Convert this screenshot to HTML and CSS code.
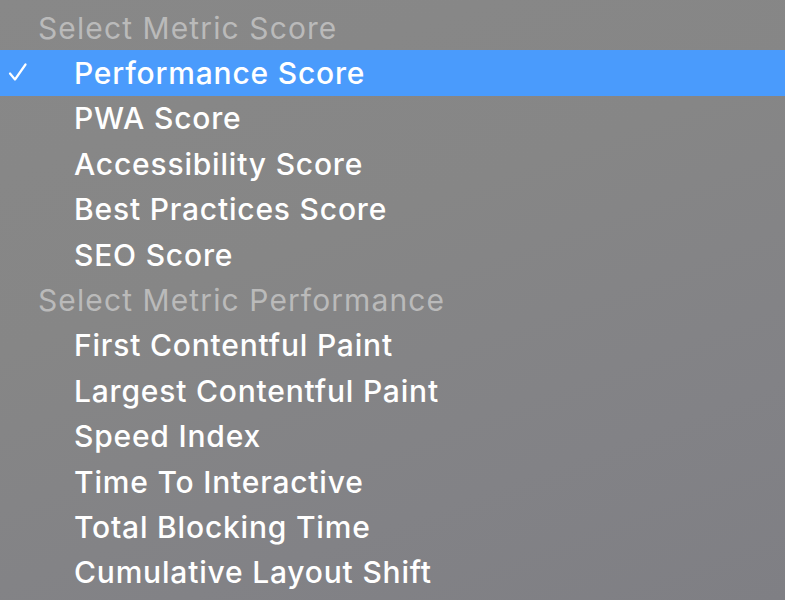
FILE: index.html
```html
<!DOCTYPE html>
<html>
<head>
<meta charset="utf-8">
<link rel="stylesheet" href="styles.css">
</head>
<body>
<div class="menu">
  <div class="header">Select Metric Score</div>
  <div class="item selected"><span class="check"><svg width="20" height="20" viewBox="0 0 20 20"><path d="M2 10.5 L7 16.5 L17.5 1.5" fill="none" stroke="#ffffff" stroke-width="2.2" stroke-linecap="round" stroke-linejoin="round"/></svg></span><span class="label">Performance Score</span></div>
  <div class="item"><span class="check"></span><span class="label">PWA Score</span></div>
  <div class="item"><span class="check"></span><span class="label">Accessibility Score</span></div>
  <div class="item"><span class="check"></span><span class="label">Best Practices Score</span></div>
  <div class="item"><span class="check"></span><span class="label">SEO Score</span></div>
  <div class="header">Select Metric Performance</div>
  <div class="item"><span class="check"></span><span class="label">First Contentful Paint</span></div>
  <div class="item"><span class="check"></span><span class="label">Largest Contentful Paint</span></div>
  <div class="item"><span class="check"></span><span class="label">Speed Index</span></div>
  <div class="item"><span class="check"></span><span class="label">Time To Interactive</span></div>
  <div class="item"><span class="check"></span><span class="label">Total Blocking Time</span></div>
  <div class="item"><span class="check"></span><span class="label">Cumulative Layout Shift</span></div>
</div>
</body>
</html>
```
FILE: styles.css
```css
html, body {
  margin: 0;
  padding: 0;
  width: 785px;
  height: 600px;
  overflow: hidden;
}
body {
  background: linear-gradient(160deg, #888888 0%, #868686 40%, #828286 75%, #7f7f84 100%);
  font-family: Inter, "Liberation Sans", sans-serif;
}
.menu {
  padding-top: 5px;
  display: flex;
  flex-direction: column;
}
.header, .item {
  height: 45.4px;
  display: flex;
  align-items: center;
  font-size: 30px;
  font-weight: 500;
  letter-spacing: 0.8px;
  white-space: nowrap;
}
.header {
  color: #bababa;
  font-weight: 400;
  letter-spacing: 1.1px;
  padding-left: 38px;
}
.item {
  color: #ffffff;
}
.item.selected {
  background: #4a9bfc;
}
.check {
  width: 74px;
  padding-left: 8px;
  box-sizing: border-box;
  display: flex;
  align-items: center;
}
.check svg {
  display: block;
}
```
